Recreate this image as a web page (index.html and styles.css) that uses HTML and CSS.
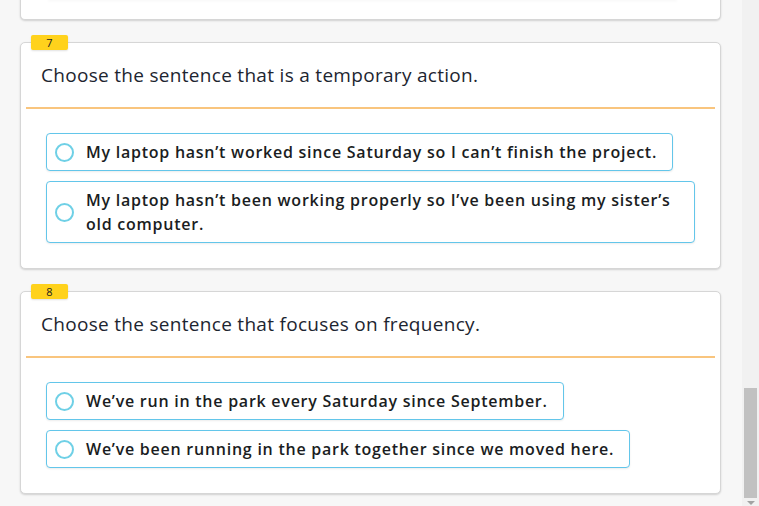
FILE: index.html
```html
<!DOCTYPE html>
<html>
<head>
<meta charset="utf-8">
<link rel="stylesheet" href="styles.css">
</head>
<body>
<div class="page">
  <main class="content">
    <section class="card card-prev">
      <div class="prev-shadow"></div>
    </section>

    <section class="card">
      <span class="badge">7</span>
      <h2 class="question">Choose the sentence that is a temporary action.</h2>
      <div class="divider"></div>
      <div class="options">
        <label class="option"><span class="radio"></span><span class="opt-text">My laptop hasn’t worked since Saturday so I can’t finish the project.</span></label>
        <label class="option"><span class="radio"></span><span class="opt-text">My laptop hasn’t been working properly so I’ve been using my sister’s old computer.</span></label>
      </div>
    </section>

    <section class="card">
      <span class="badge">8</span>
      <h2 class="question">Choose the sentence that focuses on frequency.</h2>
      <div class="divider"></div>
      <div class="options">
        <label class="option"><span class="radio"></span><span class="opt-text">We’ve run in the park every Saturday since September.</span></label>
        <label class="option"><span class="radio"></span><span class="opt-text">We’ve been running in the park together since we moved here.</span></label>
      </div>
    </section>
  </main>
  <div class="scrollbar">
    <div class="track-space"></div>
    <div class="thumb"></div>
    <div class="arrow"></div>
  </div>
</div>
</body>
</html>
```

FILE: styles.css
```css
* { box-sizing: border-box; }
html, body {
  margin: 0;
  padding: 0;
  height: 100%;
  overflow: hidden;
}
body {
  background: #f7f7f7;
  font-family: "Open Sans", "Noto Sans", sans-serif;
  color: #1e2328;
}
.page {
  display: flex;
  height: 506px;
}
.content {
  flex: 1;
  padding: 0 21px 0 20px;
}
.card {
  position: relative;
  background: #fff;
  border: 1px solid #d6d6d6;
  border-radius: 5px;
  box-shadow: 0 1px 2px rgba(0,0,0,0.16);
  margin-top: 22px;
  padding-bottom: 25px;
}
.card-prev {
  margin-top: -10px;
  height: 30px;
  padding: 9px 0 0 0;
  border-top: none;
  border-radius: 0 0 5px 5px;
}
.prev-shadow {
  margin: 0 43px 0 27px;
  height: 1px;
  box-shadow: 0 1px 3px rgba(0,0,0,0.07);
}
.badge {
  position: absolute;
  top: -8px;
  left: 10px;
  width: 37px;
  height: 15px;
  background: #ffd21c;
  border-radius: 2px;
  box-shadow: 0 1px 2px rgba(0,0,0,0.12);
  font-size: 11px;
  line-height: 15px;
  text-align: center;
  color: #222;
}
.question {
  margin: 0;
  padding: 20px 20px 20px;
  font-size: 19px;
  line-height: 24px;
  font-weight: 400;
  color: #1d2530;
  letter-spacing: 0.3px;
}
.divider {
  height: 2px;
  margin: 0 5px 0 5px;
  background: #f9c57e;
}
.options {
  display: flex;
  flex-direction: column;
  align-items: flex-start;
  gap: 10px;
  padding: 24px 25px 0 25px;
}
.option {
  display: flex;
  align-items: center;
  gap: 12px;
  max-width: 650px;
  padding: 6px 15px 6px 8px;
  border: 1px solid #63c6ea;
  border-radius: 4px;
  box-shadow: 0 1px 2px rgba(0,0,0,0.08);
  background: #fff;
}
.radio {
  flex: none;
  width: 19px;
  height: 19px;
  border: 2px solid #6fd0e6;
  border-radius: 50%;
}
.opt-text {
  font-size: 16px;
  line-height: 24px;
  font-weight: 600;
  color: #1a1d22;
  letter-spacing: 0.75px;
}
.scrollbar {
  width: 17px;
  flex: none;
  background: #f1f1f1;
  display: flex;
  flex-direction: column;
  align-items: center;
}
.track-space { height: 388px; }
.thumb {
  width: 13px;
  height: 110px;
  background: #c1c1c1;
}
.arrow {
  margin-top: 3px;
  width: 0;
  height: 0;
  border-left: 4px solid transparent;
  border-right: 4px solid transparent;
  border-top: 4px solid #a3a3a3;
}
```
